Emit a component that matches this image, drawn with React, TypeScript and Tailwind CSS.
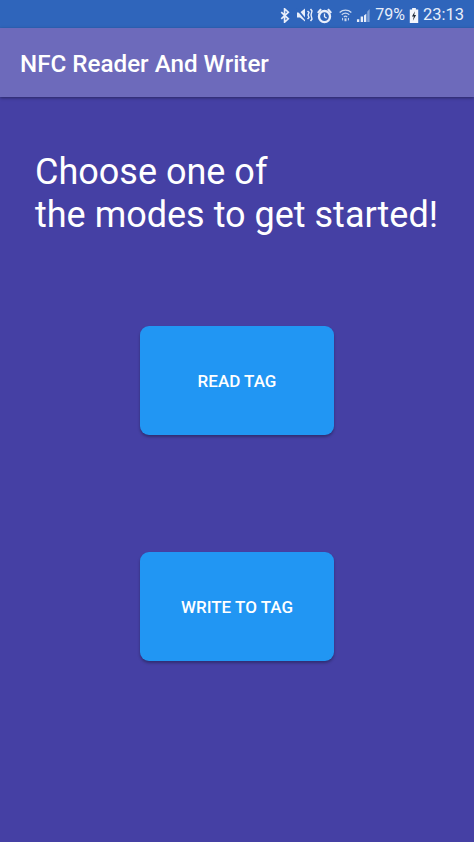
function BluetoothIcon() {
  return (
    <svg viewBox="0 0 12 18" className="w-[10px] h-[15px]" fill="none" stroke="currentColor" strokeWidth="2">
      <path d="M1.500 5l8.500 8-4.500 4V1l4.500 4-8.500 8" />
    </svg>
  );
}

function MuteIcon() {
  return (
    <svg viewBox="0 0 18 16" className="w-[18px] h-[16px]" fill="currentColor">
      <path d="M1 5.500h3L9 1.500v13L4 10.500H1z" />
      <path d="M0.500 1.500l10 12" stroke="#2f65bb" strokeWidth="1.800" />
      <path d="M11.500 4l1.500 1.500-1 2.500 1 2.500-1.500 1.500M14.500 2l1.500 2-1 4 1 4-1.500 2" fill="none" stroke="currentColor" strokeWidth="1.400" />
    </svg>
  );
}

function AlarmIcon() {
  return (
    <svg viewBox="0 0 16 16" className="w-[17px] h-[17px]" fill="currentColor">
      <circle cx="8" cy="9" r="5.200" fill="none" stroke="currentColor" strokeWidth="2.200" />
      <path d="M8 6v3.200l2 1.300" fill="none" stroke="currentColor" strokeWidth="1.200" />
      <path d="M1 5l3-3.500 1.500 1-3.300 3.500zM15 5l-3-3.500-1.500 1 3.300 3.500z" />
    </svg>
  );
}

function WifiIcon() {
  return (
    <svg viewBox="0 0 18 16" className="w-[15px] h-[16px]" fill="none" stroke="currentColor" strokeWidth="1.500" opacity="0.85">
      <path d="M2 5c4-3.600 10-3.600 14 0" />
      <path d="M4.500 7.700c2.600-2.200 6.400-2.200 9 0" />
      <path d="M7 10.300c1.200-1 2.800-1 4 0" />
      <path d="M9 12v3.500" strokeWidth="2.400" />
      <path d="M5.500 11.500v3M12.500 11.500v3" strokeWidth="1.200" />
    </svg>
  );
}

function SignalIcon() {
  return (
    <svg viewBox="0 0 16 16" className="w-[15px] h-[15px]" fill="currentColor">
      <path d="M1 15h2.500v-3H1zM5 15h2.500V9H5zM8.500 15H11V6L8.500 8z" />
      <path d="M12 15h2.500V1L12 4z" opacity="0.45" />
    </svg>
  );
}

function BatteryIcon() {
  return (
    <svg viewBox="0 0 10 16" className="w-[10px] h-[15px]">
      <path d="M3 0h4v1.500h2.500V16H.5V1.500H3z" fill="#f4f6fb" />
      <path d="M6 3.500L2.800 9h2l-1 4.500L7.200 7.500h-2z" fill="#1f2937" />
    </svg>
  );
}

export default function App() {
  return (
    <div className="w-[474px] h-[842px] overflow-hidden flex flex-col bg-[#4540a4] font-['Roboto',sans-serif] text-white">
      {/* status bar */}
      <div className="h-[28px] shrink-0 bg-[#2f65bb] flex items-center justify-end pr-[10px] pt-[2px] text-[#e8eefa]">
        <BluetoothIcon />
        <span className="w-[6px]" />
        <MuteIcon />
        <span className="w-[2px]" />
        <AlarmIcon />
        <span className="w-[5px]" />
        <WifiIcon />
        <span className="w-[3px]" />
        <SignalIcon />
        <span className="w-[4px]" />
        <span className="text-[16px] leading-none">79%</span>
        <span className="w-[4px]" />
        <BatteryIcon />
        <span className="w-[4px]" />
        <span className="text-[16.500px] leading-none">23:13</span>
      </div>

      {/* app bar */}
      <div className="h-[69px] shrink-0 bg-[#6d6abb] flex items-center pl-[20px] pt-[3px] shadow-[0_1px_3px_rgba(0,0,0,0.4)] z-10">
        <h1 className="text-[24.200px] font-medium leading-none">NFC Reader And Writer</h1>
      </div>

      <div className="flex-1 flex flex-col">
        <p className="mt-[54px] pl-[35px] text-[36px] leading-[43px] whitespace-nowrap">
          Choose one of
          <br />
          the modes to get started!
        </p>

        <div className="mt-[89px] flex flex-col items-center gap-[117px]">
          <button className="w-[194px] h-[109px] rounded-[9px] bg-[#2196f3] text-[17px] font-medium pt-[2px] shadow-[0_2px_3px_rgba(0,0,0,0.3)]">
            READ TAG
          </button>
          <button className="w-[194px] h-[109px] rounded-[9px] bg-[#2196f3] text-[17px] font-medium pt-[2px] shadow-[0_2px_3px_rgba(0,0,0,0.3)]">
            WRITE TO TAG
          </button>
        </div>
      </div>
    </div>
  );
}
